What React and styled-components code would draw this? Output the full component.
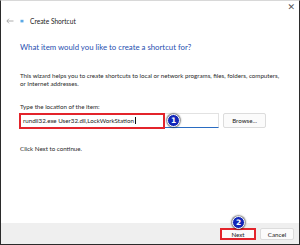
import React from "react";
import styled, { createGlobalStyle } from "styled-components";

const Global = createGlobalStyle`
  html, body { margin: 0; padding: 0; background: #fff; }
  * { box-sizing: border-box; }
`;

const Window = styled.div`
  width: 300px;
  height: 245px;
  border: 1px solid #2b2b2b;
  border-top-color: #d8d8d8;
  background: #fff;
  display: flex;
  flex-direction: column;
  font-family: "Lato", "Noto Sans", sans-serif;
  color: #1a1a1a;
  position: relative;
  overflow: hidden;
`;

const TitleBar = styled.div`
  height: 12px;
  display: flex;
  justify-content: flex-end;
  align-items: center;
  padding-right: 4px;
`;

const Close = styled.span`
  font-size: 9px;
  line-height: 1;
  color: #555;
  font-family: "DejaVu Sans", sans-serif;
`;

const Header = styled.div`
  display: flex;
  align-items: center;
  height: 16px;
  padding-left: 5px;
  gap: 6px;
  font-size: 6.6px;
`;

const Body = styled.div`
  flex: 1;
  padding: 0 0 0 18px;
  display: flex;
  flex-direction: column;
`;

const Heading = styled.h1`
  margin: 12px 0 0 1px;
  font-size: 7.8px;
  font-weight: 400;
  color: #1f4fb0;
  line-height: 13px;
  white-space: nowrap;
`;

const Text = styled.p`
  margin: ${(p) => p.$mt || 0}px 0 0 1px;
  font-size: 6.2px;
  line-height: 7.5px;
  color: #2a2a2a;
  white-space: nowrap;
`;

const InputRow = styled.div`
  display: flex;
  align-items: center;
  margin-top: 2px;
  height: 15px;
  position: relative;
`;

const Field = styled.div`
  width: 200px;
  height: 15px;
  border: 1px solid #e2e2e2;
  border-bottom: 1px solid #2a6cc2;
  display: flex;
  align-items: center;
  padding-left: 3px;
  font-size: 6.2px;
  position: relative;
`;

const Highlight = styled.div`
  position: absolute;
  left: -1px;
  top: -1px;
  width: 146px;
  height: 16px;
  border: 2px solid #e3242b;
`;

const Caret = styled.span`
  display: inline-block;
  width: 1px;
  height: 7px;
  background: #111;
  margin-left: 1px;
`;

const Button = styled.div`
  width: ${(p) => p.$w}px;
  height: ${(p) => p.$h || 15}px;
  margin-left: ${(p) => p.$ml || 0}px;
  background: #fbfbfb;
  border: 1px solid #dcdcdc;
  border-radius: 2px;
  display: flex;
  align-items: center;
  justify-content: center;
  font-size: 6.2px;
  color: #222;
  position: relative;
`;

const Footer = styled.div`
  height: 21px;
  background: #efefef;
  display: flex;
  justify-content: flex-end;
  align-items: center;
  padding-right: 5px;
  padding-top: 1px;
  gap: 4px;
`;

const Red = styled.div`
  position: absolute;
  inset: -1px;
  border: 2px solid #e3242b;
`;

const Badge = styled.div`
  position: absolute;
  left: ${(p) => p.$x}px;
  top: ${(p) => p.$y}px;
  width: 13px;
  height: 13px;
  border-radius: 50%;
  background: #1226b8;
  border: 1.3px solid #fff;
  box-shadow: 0 0 1.5px 0.8px rgba(0, 0, 0, 0.55);
  color: #fff;
  font-family: "DejaVu Sans", sans-serif;
  font-weight: 700;
  font-size: 7.5px;
  display: flex;
  align-items: center;
  justify-content: center;
  z-index: 2;
`;

const BackArrow = () => (
  <svg width="8" height="6" viewBox="0 0 8 6">
    <path d="M7.5 3H1M3 0.7L0.8 3L3 5.3" stroke="#9a9a9a" strokeWidth="0.8" fill="none" />
  </svg>
);

const ShortcutIcon = () => (
  <svg width="4" height="4" viewBox="0 0 4 4">
    <rect x="0.5" y="0.8" width="3" height="2.6" fill="#5aa9e6" />
  </svg>
);

export default function App() {
  return (
    <>
      <Global />
      <Window>
        <TitleBar>
          <Close>✕</Close>
        </TitleBar>
        <Header>
          <BackArrow />
          <ShortcutIcon />
          <span>Create Shortcut</span>
        </Header>
        <Body>
          <Heading>What item would you like to create a shortcut for?</Heading>
          <Text $mt={18}>
            This wizard helps you to create shortcuts to local or network programs, files, folders, computers,
          </Text>
          <Text>or Internet addresses.</Text>
          <Text $mt={16}>Type the location of the item:</Text>
          <InputRow>
            <Field>
              rundll32.exe User32.dll,LockWorkStation
              <Caret />
              <Highlight />
            </Field>
            <Button $w={43} $ml={4}>Browse...</Button>
            <Badge $x={148} $y={1}>1</Badge>
          </InputRow>
          <Text $mt={17}>Click Next to continue.</Text>
        </Body>
        <Footer>
          <Button $w={36} $h={12}>
            Next
            <Red />
          </Button>
          <Button $w={34} $h={12}>Cancel</Button>
        </Footer>
        <Badge $x={231} $y={215}>2</Badge>
      </Window>
    </>
  );
}
